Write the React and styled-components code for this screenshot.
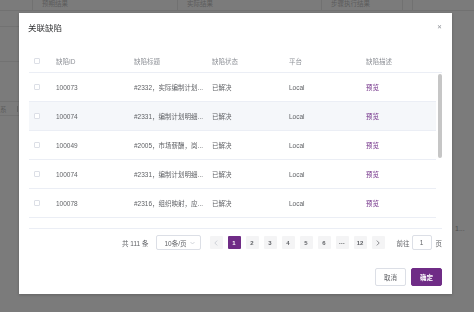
import styled, { createGlobalStyle } from 'styled-components'

const GlobalStyle = createGlobalStyle`
  html, body {
    margin: 0;
    padding: 0;
    width: 474px;
    height: 312px;
    overflow: hidden;
    background: #7b7b7b;
    font-family: "Liberation Sans", "Noto Sans CJK SC", sans-serif;
  }
  * { box-sizing: border-box; }
`

const PURPLE = '#6f2c86'

const rows = [
  { id: '100073', title: '#2332，实际编制计划...', status: '已解决', platform: 'Local' },
  { id: '100074', title: '#2331，编制计划明细...', status: '已解决', platform: 'Local', hover: true },
  { id: '100049', title: '#2005，市场薪酬，岗...', status: '已解决', platform: 'Local' },
  { id: '100074', title: '#2331，编制计划明细...', status: '已解决', platform: 'Local' },
  { id: '100078', title: '#2316，组织映射，应...', status: '已解决', platform: 'Local' },
]

const pages = ['1', '2', '3', '4', '5', '6', '···', '12']

export default function App() {
  return (
    <>
      <GlobalStyle />
      <Backdrop>
        <BackHead>
          <BackCell $w={33} />
          <BackCell $w={145}>预期结果</BackCell>
          <BackCell $w={144}>实际结果</BackCell>
          <BackCell $w={81}>步骤执行结果</BackCell>
          <BackCell $w={8} />
        </BackHead>
        <BackLine $h={16} />
        <BackLine $h={35} />
        <BackLine $h={40} />
        <BackSide>
          <span>系</span>
          <i />
        </BackSide>
        <BackMore>1...</BackMore>
      </Backdrop>

      <Modal>
        <Header>
          <Title>关联缺陷</Title>
          <Close>✕</Close>
        </Header>

        <Table>
          <HeadRow>
            <Cell><Check /></Cell>
            <Cell>缺陷ID</Cell>
            <Cell>缺陷标题</Cell>
            <Cell>缺陷状态</Cell>
            <Cell>平台</Cell>
            <Cell>缺陷描述</Cell>
          </HeadRow>
          <Body>
            {rows.map((r, i) => (
              <Row key={i} $hover={r.hover}>
                <Cell><Check /></Cell>
                <Cell>{r.id}</Cell>
                <Cell>{r.title}</Cell>
                <Cell>{r.status}</Cell>
                <Cell>{r.platform}</Cell>
                <Cell><Link>预览</Link></Cell>
              </Row>
            ))}
            <ScrollThumb />
          </Body>
        </Table>

        <Pager>
          <Total>共 111 条</Total>
          <Select>
            <span>10条/页</span>
            <svg width="5" height="4" viewBox="0 0 10 6">
              <path d="M1 1l4 4 4-4" fill="none" stroke="#c0c4cc" strokeWidth="1.4" />
            </svg>
          </Select>
          <PageBtn>
            <svg width="4" height="6" viewBox="0 0 6 10">
              <path d="M5 1L1 5l4 4" fill="none" stroke="#c0c4cc" strokeWidth="1.2" />
            </svg>
          </PageBtn>
          {pages.map((p) => (
            <PageBtn key={p} $active={p === '1'}>{p}</PageBtn>
          ))}
          <PageBtn>
            <svg width="4" height="6" viewBox="0 0 6 10">
              <path d="M1 1l4 4-4 4" fill="none" stroke="#606266" strokeWidth="1.2" />
            </svg>
          </PageBtn>
          <Jump>前往</Jump>
          <JumpInput>1</JumpInput>
          <Jump $tail>页</Jump>
        </Pager>

        <Footer>
          <Button>取消</Button>
          <Button $primary>确定</Button>
        </Footer>
      </Modal>
    </>
  )
}

const Backdrop = styled.div`
  position: relative;
  width: 474px;
  height: 312px;
  color: #5c5c5c;
  font-size: 6.5px;
`

const BackHead = styled.div`
  display: flex;
  height: 11px;
  border-bottom: 1px solid #717171;
`

const BackCell = styled.div`
  width: ${(p) => p.$w}px;
  padding-left: 9px;
  line-height: 8px;
  border-right: 1px solid #717171;
  white-space: nowrap;
`

const BackLine = styled.div`
  width: 19px;
  height: ${(p) => p.$h}px;
  border-bottom: 1px solid #727272;
`

const BackSide = styled.div`
  display: flex;
  align-items: center;
  gap: 10px;
  height: 14px;
  width: 19px;
  border-bottom: 1px solid #727272;

  i {
    width: 1px;
    height: 6px;
    background: #666;
  }
`

const BackMore = styled.div`
  position: absolute;
  left: 455px;
  top: 225px;
  font-size: 7px;
  color: #4e4e4e;
`

const Modal = styled.div`
  position: fixed;
  left: 19px;
  top: 13px;
  width: 433px;
  height: 281px;
  background: #fff;
  display: flex;
  flex-direction: column;
  box-shadow: 0 1px 3px rgba(0, 0, 0, 0.2);
`

const Header = styled.div`
  display: flex;
  justify-content: space-between;
  align-items: flex-start;
  padding: 9px 10px 0 9px;
  height: 37px;
`

const Title = styled.div`
  font-size: 8.5px;
  line-height: 12px;
  color: #303133;
`

const Close = styled.div`
  font-size: 6px;
  line-height: 10px;
  color: #909399;
`

const Table = styled.div`
  margin: 0 10px;
  display: flex;
  flex-direction: column;
`

const grid = `
  display: grid;
  grid-template-columns: 19px 78px 78px 77px 77px 1fr;
  align-items: center;
  border-bottom: 1px solid #ebeef5;
`

const HeadRow = styled.div`
  ${grid}
  height: 23px;
  color: #909399;
`

const Body = styled.div`
  position: relative;
  height: 156px;
  overflow: hidden;
  border-bottom: 1px solid #ebeef5;
`

const Row = styled.div`
  ${grid}
  height: 29px;
  color: #606266;
  background: ${(p) => (p.$hover ? '#f5f7fa' : '#fff')};
  margin-right: 6px;
`

const Cell = styled.div`
  font-size: 6.5px;
  padding: 0 0 0 8px;
  min-width: 0;
  white-space: nowrap;
  overflow: hidden;
  display: flex;
  align-items: center;

  &:first-child {
    padding: 0 0 0 5px;
  }
`

const Check = styled.span`
  width: 6px;
  height: 6px;
  border: 1px solid #dcdfe6;
  border-radius: 1px;
  background: #fff;
`

const Link = styled.span`
  color: ${PURPLE};
`

const ScrollThumb = styled.div`
  position: absolute;
  right: 0;
  top: 1px;
  width: 4px;
  height: 84px;
  border-radius: 2px;
  background: #c6c6c6;
`

const Pager = styled.div`
  display: flex;
  justify-content: flex-end;
  align-items: center;
  height: 15px;
  margin-top: 6px;
  padding-right: 10px;
  font-size: 6.5px;
  color: #606266;
`

const Total = styled.span`
  margin-right: 7px;
`

const Select = styled.div`
  width: 45px;
  height: 15px;
  border: 1px solid #dcdfe6;
  border-radius: 2px;
  display: flex;
  align-items: center;
  justify-content: space-between;
  padding: 0 5px 0 8px;
  margin-right: 9px;
`

const PageBtn = styled.div`
  width: 13px;
  height: 13px;
  margin-right: 5px;
  border-radius: 1px;
  display: flex;
  align-items: center;
  justify-content: center;
  font-weight: bold;
  font-size: 6px;
  background: ${(p) => (p.$active ? PURPLE : '#f4f4f5')};
  color: ${(p) => (p.$active ? '#fff' : '#606266')};
`

const Jump = styled.span`
  margin-left: ${(p) => (p.$tail ? '4px' : '7px')};
  margin-right: ${(p) => (p.$tail ? '0' : '2px')};
`

const JumpInput = styled.div`
  width: 20px;
  height: 15px;
  border: 1px solid #dcdfe6;
  border-radius: 2px;
  display: flex;
  align-items: center;
  justify-content: center;
`

const Footer = styled.div`
  display: flex;
  justify-content: flex-end;
  gap: 5px;
  margin-top: 18px;
  padding-right: 10px;
`

const Button = styled.button`
  width: 31px;
  height: 18px;
  padding: 0;
  border-radius: 2px;
  font-family: inherit;
  font-size: 6.5px;
  border: 1px solid ${(p) => (p.$primary ? PURPLE : '#dcdfe6')};
  background: ${(p) => (p.$primary ? PURPLE : '#fff')};
  color: ${(p) => (p.$primary ? '#fff' : '#606266')};
  font-weight: ${(p) => (p.$primary ? 'bold' : 'normal')};
`
